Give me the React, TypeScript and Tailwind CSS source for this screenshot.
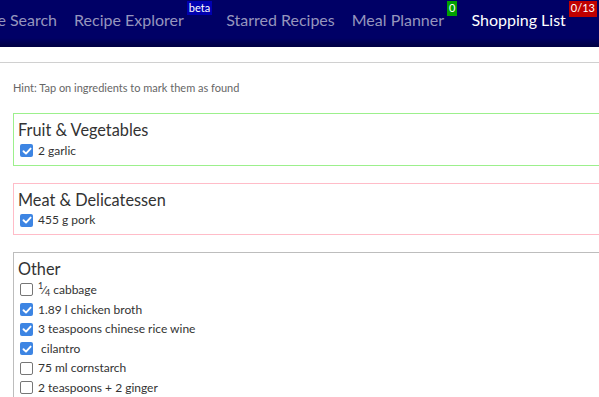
import { ReactNode } from 'react'

type NavItem = {
    label: string
    active?: boolean
    badge?: { text: string, className: string }
}

const navItems: NavItem[] = [
    { label: "Recipe Search" },
    { label: "Recipe Explorer", badge: { text: "beta", className: "bg-[#0000b0] h-[14px]" } },
    { label: "Starred Recipes" },
    { label: "Meal Planner", badge: { text: "0", className: "bg-[#00a000] h-[15px]" } },
    { label: "Shopping List", active: true, badge: { text: "0/13", className: "bg-[#c00000] h-[16px]" } },
]

type Ingredient = { label: ReactNode, found: boolean }

type Category = { name: string, border: string, items: Ingredient[] }

const categories: Category[] = [
    { name: "Fruit & Vegetables", border: "border-[#9cf08c]", items: [{ label: "2 garlic", found: true }] },
    { name: "Meat & Delicatessen", border: "border-[#ffbcc8]", items: [{ label: "455 g pork", found: true }] },
    {
        name: "Other", border: "border-[#bdbdbd]", items: [
            { label: <><sup className="text-[9px]">1</sup>⁄<sub className="text-[9px]">4</sub> cabbage</>, found: false },
            { label: "1.89 l chicken broth", found: true },
            { label: "3 teaspoons chinese rice wine", found: true },
            { label: "\u00a0cilantro", found: true },
            { label: "75 ml cornstarch", found: false },
            { label: "2 teaspoons + 2 ginger", found: false },
        ]
    },
]

function Checkbox({ checked }: { checked: boolean }) {
    if (checked) {
        return (
            <span className="w-[13px] h-[13px] mr-[5px] rounded-[2px] bg-[#3d85e3] flex items-center justify-center shrink-0">
                <svg width="10" height="10" viewBox="0 0 10 10">
                    <path d="M1.5 5.2 L4 7.6 L8.6 2.6" fill="none" stroke="white" strokeWidth="1.9" strokeLinecap="round" strokeLinejoin="round" />
                </svg>
            </span>
        )
    }
    return <span className="w-[13px] h-[13px] mr-[5px] rounded-[2px] border-[1.5px] border-[#767676] bg-white shrink-0"></span>
}

function NavBar() {
    return (
        <nav className="bg-[#000066] h-[47px] overflow-hidden relative">
            <ul className="flex items-start ml-[-55px] h-[38px]">
                {navItems.map((item) =>
                    <li key={item.label} className="flex items-start whitespace-nowrap">
                        <span className={`pl-[14px] pt-[9px] text-[16px] leading-[22px] ${item.active ? "text-white" : "text-[#9595bd]"}`}>{item.label}</span>
                        {item.badge ?
                            <span className={`ml-[3px] mt-[1px] px-[2px] text-[11px] leading-[14px] text-white ${item.badge.className}`}>{item.badge.text}</span>
                            : <span className="w-[3px]"></span>}
                    </li>
                )}
            </ul>
            <div className="absolute left-0 right-0 bottom-0 h-[9px] bg-gradient-to-b from-[#000066] to-[#000042]"></div>
        </nav>
    )
}

export default function App() {
    return (
        <div className="w-[599px] h-[397px] overflow-hidden bg-white font-['Lato',sans-serif] text-[#333]">
            <NavBar />
            <div className="mt-[15px] border-t border-[#d0d0d0] pl-[13px]">
                <p className="pt-[18px] text-[11px] leading-[14px] text-[#666]">Hint: Tap on ingredients to mark them as found</p>
                <div className="mt-[18px] flex flex-col gap-[17px]">
                    {categories.map((category) =>
                        <section key={category.name} className={`border-l border-t border-b ${category.border} pl-[4px] pt-[5px] pb-[4px] mr-[-10px]`}>
                            <h2 className="text-[16.3px] leading-[22px]">{category.name}</h2>
                            <ul>
                                {category.items.map((item, i) =>
                                    <li key={i} className="flex items-center h-[19.6px] pl-[2px] text-[12px]">
                                        <Checkbox checked={item.found} />
                                        <span>{item.label}</span>
                                    </li>
                                )}
                            </ul>
                        </section>
                    )}
                </div>
            </div>
        </div>
    )
}
